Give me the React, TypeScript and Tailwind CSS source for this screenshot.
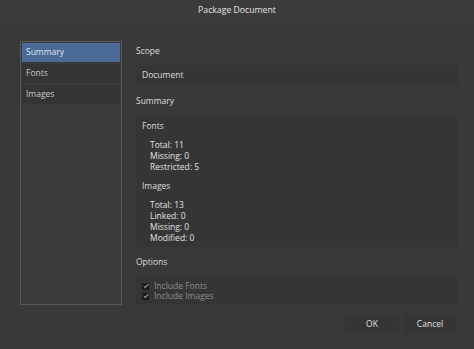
import React from "react";

const font = { fontFamily: '"Open Sans", "Noto Sans", sans-serif' };

function Check() {
  return (
    <span className="w-[7px] h-[7px] bg-[#1c1c1c] flex items-center justify-center shrink-0">
      <svg width="6" height="6" viewBox="0 0 6 6">
        <path d="M0.8 3.2 L2.3 4.6 L5.2 1.2" stroke="#e8e8e8" strokeWidth="0.9" fill="none" />
      </svg>
    </span>
  );
}

export default function App() {
  return (
    <div
      className="w-[474px] h-[349px] bg-[#393939] flex flex-col text-[8.5px] text-[#dcdcdc] overflow-hidden"
      style={font}
    >
      <div className="h-[22px] flex items-center justify-center bg-[#3b3b3b] text-[#e4e4e4] text-[8.7px]">
        Package Document
      </div>
      <div className="flex pt-[19px] pl-[20px]">
        <div className="w-[102px] h-[264px] border border-[#585858] bg-[#3b3b3b] p-[1px] flex flex-col gap-[2px]">
          <div className="h-[19px] bg-[#4c6a98] flex items-center pl-[4px] text-[#dfe6f0]">Summary</div>
          <div className="h-[19px] bg-[#343434] flex items-center pl-[4px] text-[#c8c8c8]">Fonts</div>
          <div className="h-[19px] bg-[#343434] flex items-center pl-[4px] text-[#c8c8c8]">Images</div>
        </div>
        <div className="ml-[13px] w-[323px] flex flex-col">
          <div className="h-[21px] flex items-center pl-[1px]">Scope</div>
          <div className="mt-[3px] h-[21px] bg-[#353535] flex items-center pl-[7px]">Document</div>
          <div className="mt-[4px] h-[22px] flex items-center pl-[1px]">Summary</div>
          <div className="mt-[3px] h-[132px] bg-[#353535] pt-[4px] pl-[7px] flex flex-col">
            <div className="h-[14px] flex items-center">Fonts</div>
            <div className="mt-[6px] pl-[8px] flex flex-col text-[#e2e2e2]">
              <div className="h-[11px] leading-[11px]">Total: 11</div>
              <div className="h-[11px] leading-[11px]">Missing: 0</div>
              <div className="h-[11px] leading-[11px]">Restricted: 5</div>
            </div>
            <div className="mt-[7px] h-[14px] flex items-center">Images</div>
            <div className="mt-[6px] pl-[8px] flex flex-col text-[#e2e2e2]">
              <div className="h-[11px] leading-[11px]">Total: 13</div>
              <div className="h-[11px] leading-[11px]">Linked: 0</div>
              <div className="h-[11px] leading-[11px]">Missing: 0</div>
              <div className="h-[11px] leading-[11px]">Modified: 0</div>
            </div>
          </div>
          <div className="mt-[4px] h-[22px] flex items-center pl-[1px]">Options</div>
          <div className="mt-[4px] h-[27px] bg-[#353535] pt-[4px] pl-[7px] flex flex-col text-[#8e8e8e]">
            <div className="flex items-center gap-[5px] h-[10px] leading-[10px]">
              <Check />
              <span>Include Fonts</span>
            </div>
            <div className="flex items-center gap-[5px] h-[10px] leading-[10px]">
              <Check />
              <span>Include Images</span>
            </div>
          </div>
        </div>
      </div>
      <div className="mt-[9px] flex justify-end pr-[17px] gap-[4px]">
        <div className="w-[54px] h-[20px] bg-[#353535] flex items-center justify-center text-[#e0e0e0]">OK</div>
        <div className="w-[54px] h-[20px] bg-[#353535] flex items-center justify-center text-[#e0e0e0]">Cancel</div>
      </div>
    </div>
  );
}
